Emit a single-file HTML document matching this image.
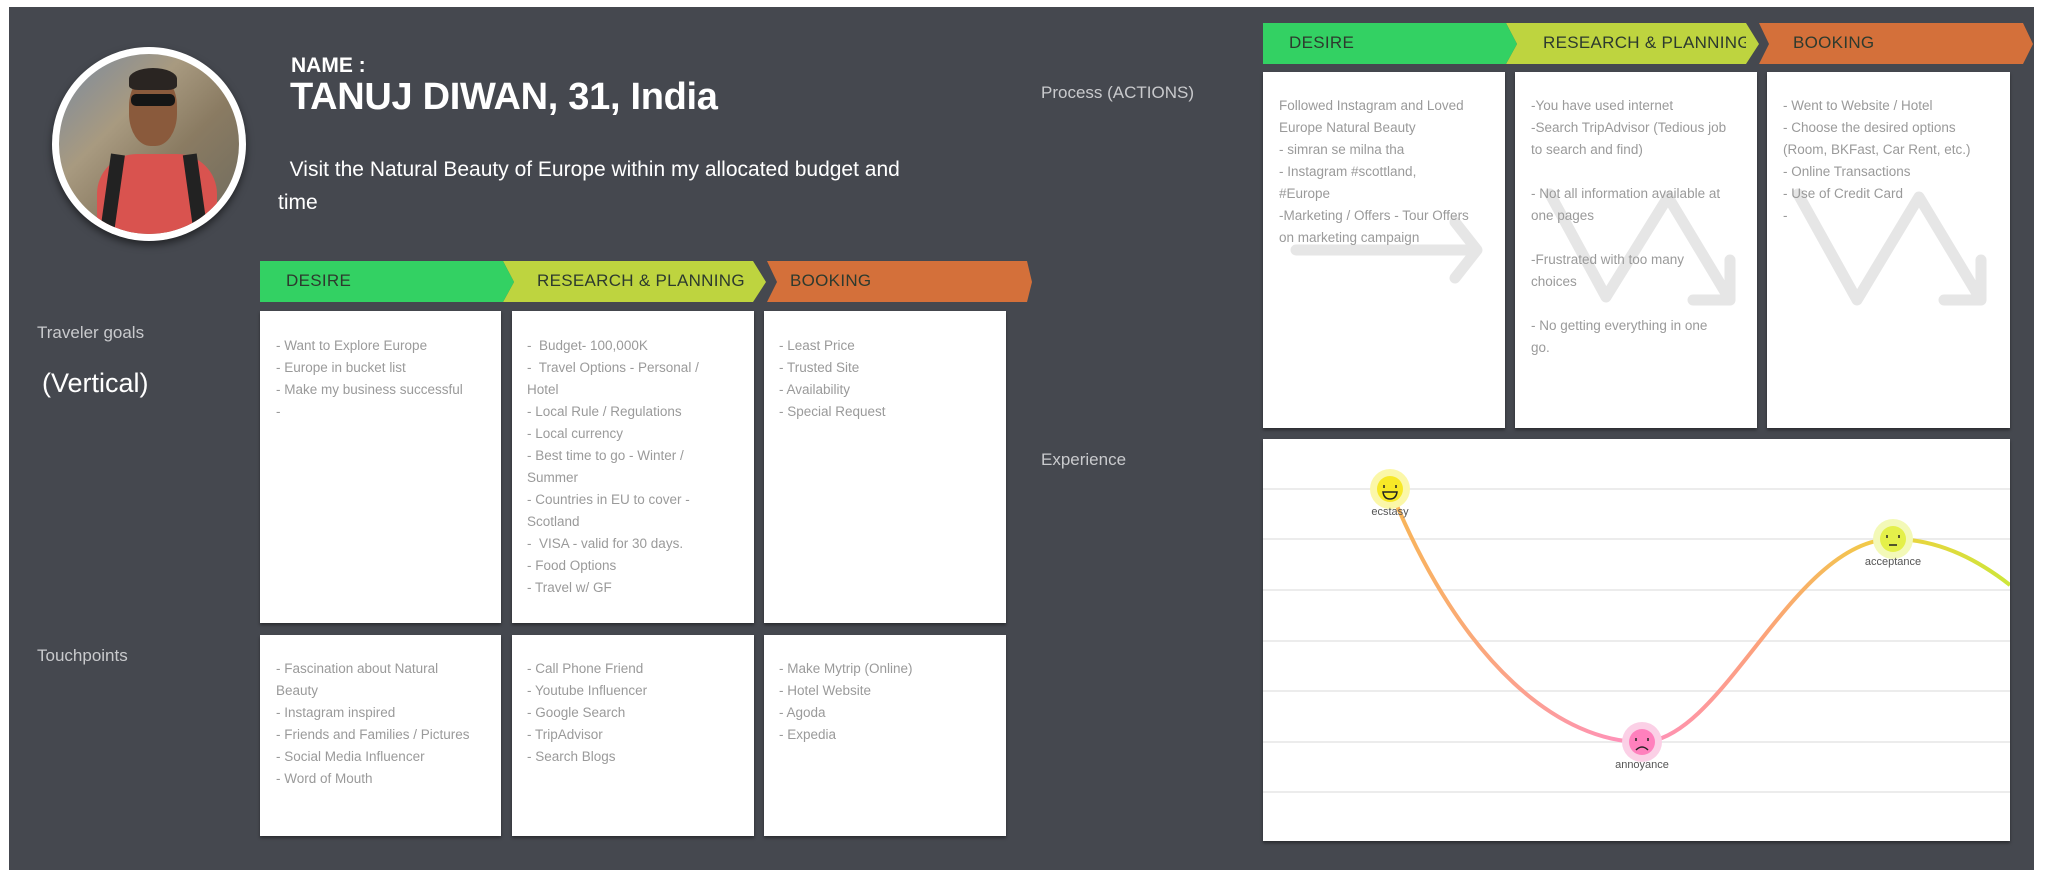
<!DOCTYPE html>
<html><head><meta charset="utf-8"><style>
*{margin:0;padding:0;box-sizing:border-box}
body{width:2048px;height:884px;background:#fff;position:relative;overflow:hidden;font-family:"Liberation Sans",sans-serif}
.bg{position:absolute;left:9px;top:7px;width:2025px;height:863px;background:#45484f}
.a{position:absolute}
.card{position:absolute;background:#fff;box-shadow:0 2px 3px rgba(0,0,0,.4)}
.t{position:absolute;color:#9a9a9a;font-size:13.5px;line-height:22px;white-space:pre}
.lbl{position:absolute;color:#c9cacd;font-size:17px}
.chev{position:absolute;height:40px}
.chev span{position:absolute;top:10px;font-size:17px;color:#2d3a2e;letter-spacing:.3px;white-space:nowrap;overflow:hidden}
</style></head><body>
<div class="bg"></div>

<!-- avatar -->
<div class="a" style="left:52px;top:47px;width:194px;height:194px;border-radius:50%;background:#fff;box-shadow:0 4px 8px rgba(0,0,0,.5)"></div>
<div class="a" style="left:59px;top:54px;width:180px;height:180px;border-radius:50%;overflow:hidden;background:linear-gradient(135deg,#7a8aa0 0%,#a89a80 35%,#8a7b62 60%,#6d6a5e 100%)">
 <div class="a" style="left:38px;top:100px;width:120px;height:110px;border-radius:40px 40px 0 0;background:#d9534f"></div>
 <div class="a" style="left:70px;top:20px;width:48px;height:72px;border-radius:45%;background:#8a5a3c"></div>
 <div class="a" style="left:70px;top:14px;width:48px;height:22px;border-radius:50% 50% 20% 20%;background:#2a2522"></div>
 <div class="a" style="left:72px;top:40px;width:44px;height:12px;border-radius:5px;background:#151515"></div>
 <div class="a" style="left:45px;top:100px;width:14px;height:100px;background:#222;transform:rotate(8deg)"></div>
 <div class="a" style="left:130px;top:100px;width:14px;height:90px;background:#222;transform:rotate(-8deg)"></div>
</div>

<div class="a" style="left:291px;top:54px;color:#fff;font-size:21px;font-weight:bold">NAME :</div>
<div class="a" style="left:290px;top:76px;color:#fff;font-size:38px;font-weight:bold;letter-spacing:-.3px">TANUJ DIWAN, 31, India</div>
<div class="a" style="left:278px;top:153px;color:#fff;font-size:21px;line-height:33px;width:640px">&nbsp;&nbsp;Visit the Natural Beauty of Europe within my allocated budget and time</div>

<div class="lbl" style="left:37px;top:323px">Traveler goals</div>
<div class="a" style="left:42px;top:368px;color:#fff;font-size:27px">(Vertical)</div>
<div class="lbl" style="left:37px;top:646px">Touchpoints</div>
<div class="lbl" style="left:1041px;top:83px">Process (ACTIONS)</div>
<div class="lbl" style="left:1041px;top:450px">Experience</div>

<!-- left chevron bar -->
<svg class="a" style="left:260px;top:261px" width="772" height="42">
 <polygon points="507,0 767,0 772,21 767,41 507,41 517,21" fill="#d4703a"/>
 <polygon points="243,0 493,0 506,21 493,41 243,41 254,21" fill="#bed43f"/>
 <polygon points="0,0 243,0 254,21 243,41 0,41" fill="#33d163"/>
</svg>
<div class="chev" style="left:260px;top:261px"><span style="left:26px">DESIRE</span><span style="left:277px;width:207px">RESEARCH &amp; PLANNING</span><span style="left:530px">BOOKING</span></div>

<!-- right chevron bar -->
<svg class="a" style="left:1263px;top:23px" width="770" height="42">
 <polygon points="496,0 760,0 770,21 760,41 496,41 506,21" fill="#d4703a"/>
 <polygon points="243,0 483,0 496,21 483,41 243,41 254,21" fill="#bed43f"/>
 <polygon points="0,0 243,0 254,21 243,41 0,41" fill="#33d163"/>
</svg>
<div class="chev" style="left:1263px;top:23px"><span style="left:26px">DESIRE</span><span style="left:280px;width:203px">RESEARCH &amp; PLANNING</span><span style="left:530px">BOOKING</span></div>

<!-- left cards row1 -->
<div class="card" style="left:260px;top:311px;width:241px;height:312px"></div>
<div class="card" style="left:512px;top:311px;width:242px;height:312px"></div>
<div class="card" style="left:764px;top:311px;width:242px;height:312px"></div>
<div class="t" style="left:276px;top:335px">- Want to Explore Europe
- Europe in bucket list
- Make my business successful
-</div>
<div class="t" style="left:527px;top:335px">-  Budget- 100,000K
-  Travel Options - Personal /
Hotel
- Local Rule / Regulations
- Local currency
- Best time to go - Winter /
Summer
- Countries in EU to cover -
Scotland
-  VISA - valid for 30 days.
- Food Options
- Travel w/ GF</div>
<div class="t" style="left:779px;top:335px">- Least Price
- Trusted Site
- Availability
- Special Request</div>

<!-- left cards row2 -->
<div class="card" style="left:260px;top:635px;width:241px;height:201px"></div>
<div class="card" style="left:512px;top:635px;width:242px;height:201px"></div>
<div class="card" style="left:764px;top:635px;width:242px;height:201px"></div>
<div class="t" style="left:276px;top:658px">- Fascination about Natural
Beauty
- Instagram inspired
- Friends and Families / Pictures
- Social Media Influencer
- Word of Mouth</div>
<div class="t" style="left:527px;top:658px">- Call Phone Friend
- Youtube Influencer
- Google Search
- TripAdvisor
- Search Blogs</div>
<div class="t" style="left:779px;top:658px">- Make Mytrip (Online)
- Hotel Website
- Agoda
- Expedia</div>

<!-- right cards -->
<div class="card" style="left:1263px;top:72px;width:242px;height:356px"></div>
<div class="card" style="left:1515px;top:72px;width:242px;height:356px"></div>
<div class="card" style="left:1767px;top:72px;width:243px;height:356px"></div>
<svg class="a" style="left:1263px;top:72px" width="748" height="356" fill="none" stroke="#e6e6e6" stroke-width="11" stroke-linecap="round" stroke-linejoin="round">
 <path d="M33,178 H210 M192,150 L214,178 L192,206"/>
 <path d="M287,122 L343,225 L405,125 L467,228 M467,188 V228 H430"/>
 <path d="M535,122 L594,228 L656,125 L718,228 M718,188 V228 H681"/>
</svg>
<div class="t" style="left:1279px;top:95px">Followed Instagram and Loved
Europe Natural Beauty
- simran se milna tha
- Instagram #scottland,
#Europe
-Marketing / Offers - Tour Offers
on marketing campaign</div>
<div class="t" style="left:1531px;top:95px">-You have used internet
-Search TripAdvisor (Tedious job
to search and find)

- Not all information available at
one pages

-Frustrated with too many
choices

- No getting everything in one
go.</div>
<div class="t" style="left:1783px;top:95px">- Went to Website / Hotel
- Choose the desired options
(Room, BKFast, Car Rent, etc.)
- Online Transactions
- Use of Credit Card
-</div>

<!-- chart -->
<div class="card" style="left:1263px;top:439px;width:747px;height:402px"></div>
<svg class="a" style="left:1263px;top:439px" width="747" height="402">
 <defs><linearGradient id="g" x1="127" y1="0" x2="747" y2="0" gradientUnits="userSpaceOnUse">
  <stop offset="0" stop-color="#f8b656"/><stop offset=".4" stop-color="#ff8fc0"/><stop offset=".6" stop-color="#fca27a"/><stop offset=".8" stop-color="#f0d040"/><stop offset="1" stop-color="#cde63a"/></linearGradient></defs>
 <g stroke="#ececec" stroke-width="2">
  <line x1="0" y1="50" x2="747" y2="50"/><line x1="0" y1="100" x2="747" y2="100"/><line x1="0" y1="151" x2="747" y2="151"/><line x1="0" y1="202" x2="747" y2="202"/><line x1="0" y1="252" x2="747" y2="252"/><line x1="0" y1="303" x2="747" y2="303"/><line x1="0" y1="353" x2="747" y2="353"/>
 </g>
 <path d="M127,50 C200,230 300,303 379,303 C460,303 530,100 630,100 C680,100 720,125 747,146" fill="none" stroke="url(#g)" stroke-width="4"/>
 <circle cx="127" cy="50" r="20" fill="#fbf7a8"/><circle cx="127" cy="50" r="13" fill="#f7e827"/>
 <path d="M121,46v3M133,46v3M120,53h14q-1,7-7,7t-7-7z" stroke="#222" stroke-width="1.5" fill="none"/>
 <circle cx="379" cy="303" r="20" fill="#fbd0e6"/><circle cx="379" cy="303" r="13" fill="#ff80bd"/>
 <path d="M373,299v3M385,299v3M373,311q6,-6 12,0" stroke="#222" stroke-width="1.5" fill="none"/>
 <circle cx="630" cy="100" r="20" fill="#f3f9b8"/><circle cx="630" cy="100" r="13" fill="#e4f04a"/>
 <path d="M624,96v3M636,96v3M626,106h8" stroke="#222" stroke-width="1.5" fill="none"/>
 <g font-family="Liberation Sans,sans-serif" font-size="11" fill="#555" text-anchor="middle">
  <text x="127" y="76">ecstasy</text><text x="379" y="329">annoyance</text><text x="630" y="126">acceptance</text>
 </g>
</svg>
</body></html>
